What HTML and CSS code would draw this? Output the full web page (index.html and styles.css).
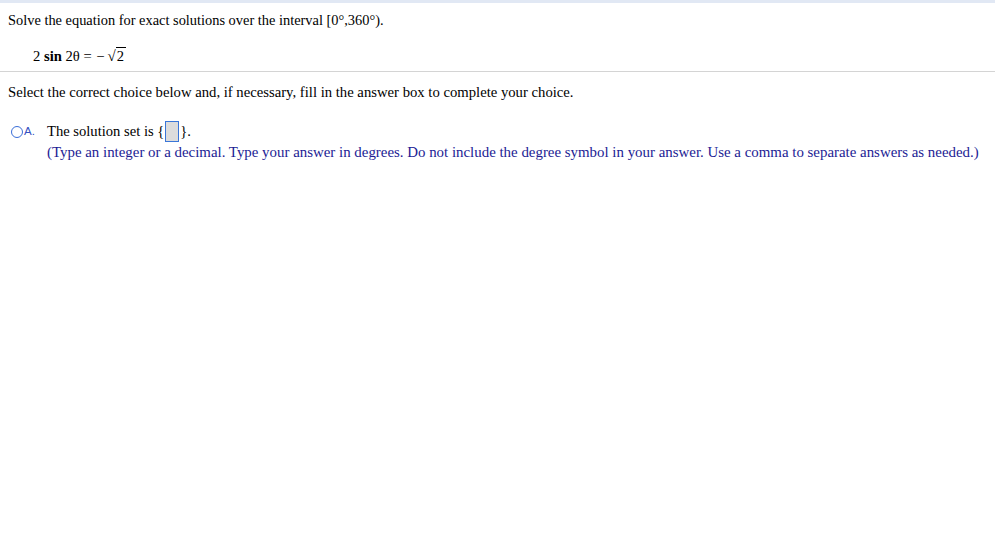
FILE: index.html
```html
<!DOCTYPE html>
<html>
<head>
<meta charset="utf-8">
<link rel="stylesheet" href="styles.css">
</head>
<body>
<div class="topbar"></div>
<div class="question">
  <p class="prompt">Solve the equation for exact solutions over the interval [0°,360°).</p>
  <p class="equation">2 <b>sin</b> 2θ = <span class="minus">−</span><span class="sqrt"><span class="rad">√</span><span class="radicand">2</span></span></p>
</div>
<div class="answer">
  <p class="instr">Select the correct choice below and, if necessary, fill in the answer box to complete your choice.</p>
  <div class="choice">
    <div class="label"><span class="radio"></span><span class="letter">A.</span></div>
    <div class="body">
      <div class="line1">The solution set is {<span class="box"></span>}.</div>
      <div class="hint">(Type an integer or a decimal. Type your answer in degrees. Do not include the degree symbol in your answer. Use a comma to separate answers as needed.)</div>
    </div>
  </div>
</div>
</body>
</html>
```
FILE: styles.css
```css
html, body {
  margin: 0;
  padding: 0;
  background: #fff;
  font-family: "Liberation Serif", "Times New Roman", serif;
  font-size: 14.5px;
  color: #000;
}
.topbar {
  height: 3px;
  background: #e1e8f4;
}
.question {
  padding: 9px 8px 0 8px;
  border-bottom: 1px solid #d4d4d4;
  height: 59px;
  box-sizing: content-box;
}
p { margin: 0; }
.prompt {
  font-size: 14.4px;
  line-height: 16px;
}
.equation {
  margin-top: 20px;
  margin-left: 25px;
  line-height: 16px;
  font-size: 14.6px;
}
.minus { margin-left: 1px; margin-right: 3px; }
.sqrt { display: inline-block; }
.rad { font-size: 15px; }
.radicand {
  border-top: 1px solid #000;
  padding: 0 2px 0 1px;
}
.answer {
  padding: 12px 8px 0 8px;
}
.instr {
  font-size: 14.7px;
  line-height: 16px;
}
.choice {
  display: flex;
  margin-top: 21px;
}
.label {
  width: 39px;
  display: flex;
  align-items: flex-start;
  padding-left: 3px;
  padding-top: 4px;
  box-sizing: border-box;
}
.radio {
  width: 12px;
  height: 12px;
  border: 1px solid #3a6ed8;
  border-radius: 50%;
  box-sizing: border-box;
  margin-top: 1px;
}
.letter {
  font-family: "Liberation Sans", Arial, sans-serif;
  font-size: 11.5px;
  color: #3550c0;
  margin-left: 1px;
  line-height: 13px;
}
.body { line-height: 21px; }
.line1 {
  font-size: 14.6px;
  line-height: 21px;
  display: flex;
  align-items: center;
}
.box {
  display: inline-block;
  width: 14px;
  height: 21px;
  background: #dcdcdc;
  border: 1px solid #3a76d8;
  box-sizing: border-box;
  margin: 0 1px;
}
.hint {
  font-size: 14.9px;
  color: #1c1c94;
  line-height: 18px;
  margin-top: 1px;
}
```
